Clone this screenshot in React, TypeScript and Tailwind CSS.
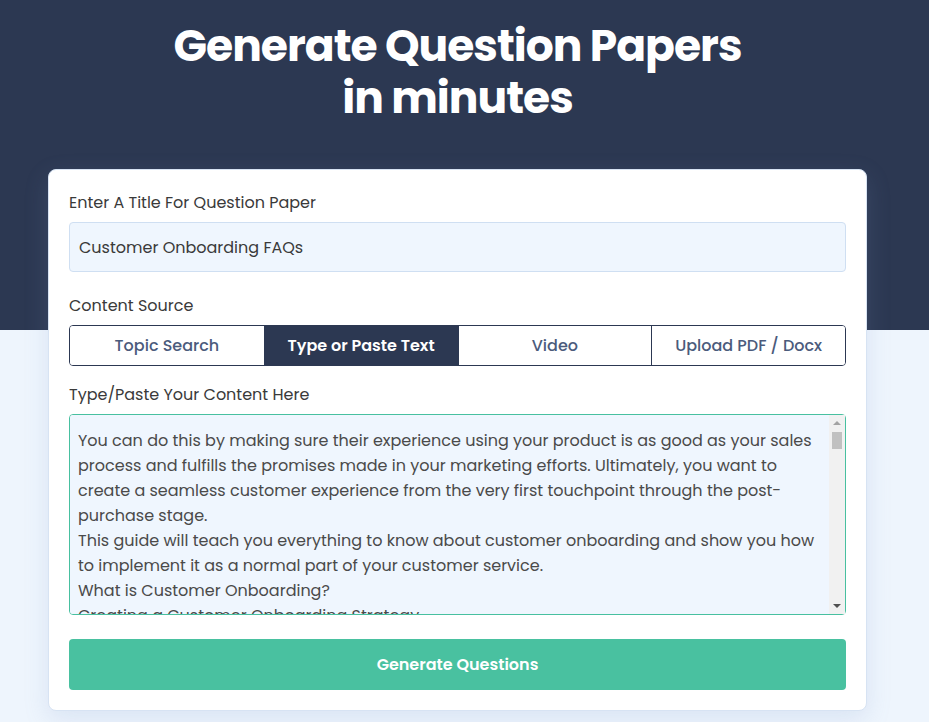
import { useState } from "react";

const tabs = ["Topic Search", "Type or Paste Text", "Video", "Upload PDF / Docx"];

const content = [
  "You can do this by making sure their experience using your product is as good as your sales",
  "process and fulfills the promises made in your marketing efforts. Ultimately, you want to",
  "create a seamless customer experience from the very first touchpoint through the post-",
  "purchase stage.",
  "This guide will teach you everything to know about customer onboarding and show you how",
  "to implement it as a normal part of your customer service.",
  "What is Customer Onboarding?",
  "Creating a Customer Onboarding Strategy",
  "Customer Onboarding Best Practices",
  "Customer onboarding is the process new users go through to get started with your product.",
  "It covers everything from the first sign-up to the moment they see real value.",
  "A good onboarding process reduces churn and builds trust with your customers.",
  "Start by mapping every step of the customer journey after the sale is closed.",
  "Send a welcome email that explains what happens next and who they can contact.",
  "Offer a product walkthrough so customers can learn the key features quickly.",
  "Check in regularly during the first weeks to answer questions and collect feedback.",
  "Measure success with activation rates, time to value and customer satisfaction.",
  "Keep improving the process as you learn more about what your customers need.",
  "Frequently Asked Questions",
  "How long should customer onboarding take?",
  "Who is responsible for onboarding new customers?",
  "What tools can help automate the onboarding process?",
  "How do you know if your onboarding process is working?",
  "Why do customers drop off during onboarding?",
  "What is the difference between onboarding and implementation?",
  "How can you personalise onboarding for different customers?",
  "Conclusion",
  "A strong onboarding experience turns new customers into loyal advocates for your brand.",
  "Invest the time to build it well and keep it up to date as your product grows.",
  "Make every customer feel supported from the very first day they sign up.",
  "Share helpful resources, guides and videos so customers can learn at their own pace.",
  "Celebrate early wins with your customers to keep them motivated and engaged.",
  "Ask for reviews and referrals once customers are happy with the results they see.",
  "Review your onboarding metrics every quarter and adjust the process where needed.",
  "Train your support team so they can guide customers through every stage.",
  "Document common questions and turn the answers into a self-service help centre.",
  "Use in-app messages to highlight features at the moment they are most useful.",
  "Set clear expectations about timelines, responsibilities and next steps.",
  "Follow up after onboarding ends to make sure customers stay on track.",
  "Keep the conversation going with regular product updates and tips.",
  "Listen to feedback and let it shape the future of your onboarding process.",
  "Customers who onboard well are more likely to renew and expand their accounts.",
  "That is why onboarding is one of the most valuable things a business can get right.",
  "Start small, measure results and improve step by step.",
  "Your customers will thank you for it.",
  "Thank you for reading this guide on customer onboarding.",
].join("\n");

// headless screenshots hide native scrollbars, so the classic one is drawn over the textarea
function FakeScrollbar() {
  return (
    <div className="pointer-events-none absolute top-px right-px bottom-px flex w-4 flex-col bg-[#f1f1f1]">
      <div className="flex h-4 items-center justify-center">
        <svg width="8" height="4" viewBox="0 0 8 4">
          <path d="M4 0 L8 4 L0 4 Z" fill="#a3a3a3" />
        </svg>
      </div>
      <div className="flex-1 px-[3px] pt-px">
        <div className="h-[17px] bg-[#c1c1c1]" />
      </div>
      <div className="flex h-4 items-center justify-center">
        <svg width="8" height="4" viewBox="0 0 8 4">
          <path d="M0 0 L8 0 L4 4 Z" fill="#505050" />
        </svg>
      </div>
    </div>
  );
}

export default function App() {
  const [title, setTitle] = useState("Customer Onboarding FAQs");
  const [active, setActive] = useState(1);
  const [text, setText] = useState(content);

  return (
    <div
      className="min-h-[722px] bg-[linear-gradient(to_bottom,#2c3852_0px,#2c3852_330px,#eef5fd_330px)] pt-5 pb-3 text-[#3a3a3a]"
      style={{ fontFamily: '"Poppins", "Inter", "Open Sans", sans-serif' }}
    >
      <div className="ml-[48px] w-[819px]">
        <h1 className="text-center text-[44px] font-bold leading-[52px] tracking-[-1px] text-white">
          Generate Question Papers
          <br />
          in minutes
        </h1>

        <div className="mt-[45px] rounded-lg border border-[#d7e3f3] bg-white px-5 pt-[21px] pb-5 shadow-[0_8px_24px_rgba(120,150,200,0.18)]">
          <label className="block text-base leading-6 text-[#3a3a3a]">
            Enter A Title For Question Paper
          </label>
          <input
            value={title}
            onChange={(e) => setTitle(e.target.value)}
            className="mt-[7px] block h-[50px] w-full rounded border border-[#cfdff2] bg-[#eff6fe] px-[9px] text-base text-[#3a3a3a] outline-none"
          />

          <label className="mt-[22px] block text-base leading-6 text-[#3a3a3a]">
            Content Source
          </label>
          <div className="mt-[7px] grid h-[41px] grid-cols-4 overflow-hidden rounded border border-[#2c3852]">
            {tabs.map((t, i) => (
              <button
                key={t}
                onClick={() => setActive(i)}
                className={
                  (i > 0 ? "border-l border-[#2c3852] " : "") +
                  (i === active
                    ? "bg-[#2c3852] font-semibold text-white"
                    : "bg-white font-medium text-[#4b5b7c]")
                }
              >
                <span className="text-base">{t}</span>
              </button>
            ))}
          </div>

          <label className="mt-[17px] block text-base leading-6 text-[#3a3a3a]">
            Type/Paste Your Content Here
          </label>
          <div className="relative mt-[7px]">
            <textarea
              value={text}
              onChange={(e) => setText(e.target.value)}
              className="block h-[201px] w-full resize-none overflow-y-scroll rounded border border-[#48c0a0] bg-[#eff6fe] pt-[13px] pr-[25px] pl-2 text-base leading-[25px] text-[#4a4a4a] outline-none"
            />
            <FakeScrollbar />
          </div>

          <button className="mt-6 block h-[51px] w-full rounded bg-[#49c1a0] text-base font-semibold text-white">
            Generate Questions
          </button>
        </div>
      </div>
    </div>
  );
}
